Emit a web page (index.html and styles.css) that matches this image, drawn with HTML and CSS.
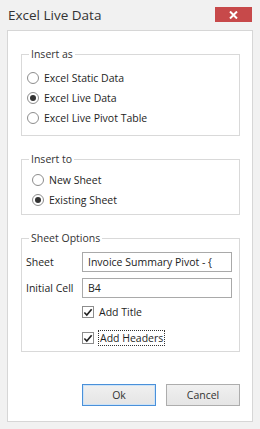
FILE: index.html
```html
<!DOCTYPE html>
<html lang="en">
<head>
    <meta charset="UTF-8" />
    <title>Excel Live Data</title>
    <link rel="stylesheet" href="styles.css">
</head>
<body>
    <div class="window">
        <!-- Title bar -->
        <div class="titlebar">
            <span class="title">Excel Live Data</span>
            <span class="close">
                <svg width="9" height="8" viewBox="0 0 9 8"><path d="M1 0.5 L8 7.5 M8 0.5 L1 7.5" stroke="#fff" stroke-width="2"/></svg>
            </span>
        </div>

        <div class="panel">
            <fieldset class="group group-as">
                <legend>Insert as</legend>
                <label class="row"><span class="radio"></span>Excel Static Data</label>
                <label class="row"><span class="radio checked"></span>Excel Live Data</label>
                <label class="row"><span class="radio"></span>Excel Live Pivot Table</label>
            </fieldset>

            <fieldset class="group group-to">
                <legend>Insert to</legend>
                <label class="row"><span class="radio"></span>New Sheet</label>
                <label class="row"><span class="radio checked"></span>Existing Sheet</label>
            </fieldset>

            <fieldset class="group group-options">
                <legend>Sheet Options</legend>
                <div class="field">
                    <span class="field-label">Sheet</span>
                    <span class="textbox">Invoice Summary Pivot - {</span>
                </div>
                <div class="field">
                    <span class="field-label">Initial Cell</span>
                    <span class="textbox">B4</span>
                </div>
                <label class="check-row">
                    <span class="check"><svg width="11" height="11" viewBox="0 0 11 11"><path d="M1.5 5.5 L4.2 8.3 L9.5 2" fill="none" stroke="#222" stroke-width="1.8"/></svg></span>
                    <span>Add Title</span>
                </label>
                <label class="check-row">
                    <span class="check"><svg width="11" height="11" viewBox="0 0 11 11"><path d="M1.5 5.5 L4.2 8.3 L9.5 2" fill="none" stroke="#222" stroke-width="1.8"/></svg></span>
                    <span class="focused">Add Headers</span>
                </label>
            </fieldset>

            <div class="buttons">
                <button class="btn btn-default">Ok</button>
                <button class="btn">Cancel</button>
            </div>
        </div>
    </div>
</body>
</html>
```

FILE: styles.css
```css
* {
    box-sizing: border-box;
    margin: 0;
    padding: 0;
}

html, body {
    width: 260px;
    height: 429px;
    overflow: hidden;
}

body {
    background: #f1f1f1;
    font-family: "Open Sans", "Noto Sans", sans-serif;
    font-size: 10.5px;
    color: #1e1e1e;
}

.window {
    height: 429px;
}

/* Title bar */
.titlebar {
    height: 30px;
    display: flex;
    align-items: flex-start;
    justify-content: space-between;
    padding: 5px 8px 0 8px;
}

.title {
    font-size: 13.5px;
    color: #333;
    line-height: 20px;
}

.close {
    width: 37px;
    height: 15px;
    margin-top: 2px;
    background: #c7494a;
    display: flex;
    align-items: center;
    justify-content: center;
}

/* White client area */
.panel {
    margin: 0 7px;
    height: 392px;
    background: #fff;
    border: 1px solid #d6d6d6;
    padding: 16px 12px 0 13px;
    display: flex;
    flex-direction: column;
}

.group {
    border: 1px solid #d9d9d9;
    min-width: 0;
    padding-left: 0;
}

.group legend {
    margin-left: 7px;
    padding: 0 2px;
    line-height: 14px;
    color: #333;
}

.group-as {
    padding-top: 7px;
    height: 89px;
}

.group-as .row {
    margin-left: 5px;
}

.group-to {
    margin-top: 16px;
    padding-top: 4px;
    height: 63px;
}

.group-to .row {
    margin-left: 10px;
}

.group-options {
    margin-top: 16px;
    padding-top: 7px;
    height: 121px;
}

.row {
    display: flex;
    align-items: center;
    height: 20px;
    gap: 5px;
}

.radio {
    width: 12px;
    height: 12px;
    border: 1px solid #8d8d8d;
    border-radius: 50%;
    background: #fff;
    display: flex;
    align-items: center;
    justify-content: center;
}

.radio.checked::after {
    content: "";
    width: 6px;
    height: 6px;
    border-radius: 50%;
    background: #333;
}

.field {
    display: flex;
    align-items: center;
    height: 20px;
    margin-left: 4px;
    margin-bottom: 6px;
}

.field + .field {
    margin-bottom: 4px;
}

.field-label {
    width: 56px;
}

.textbox {
    width: 150px;
    height: 20px;
    border: 1px solid #a9a9a9;
    padding: 0 5px;
    line-height: 18px;
    white-space: nowrap;
    overflow: hidden;
    color: #222;
}

.check-row {
    display: flex;
    align-items: center;
    height: 20px;
    margin-left: 60px;
    gap: 5px;
    margin-bottom: 6px;
}

.check {
    width: 12px;
    height: 12px;
    border: 1px solid #8d8d8d;
    background: #fff;
    display: flex;
    align-items: center;
    justify-content: center;
}

.focused {
    outline: 1px dotted #333;
    padding: 0 1px;
}

/* Dialog buttons */
.buttons {
    margin-top: auto;
    margin-bottom: 15px;
    display: flex;
    justify-content: flex-end;
    gap: 10px;
}

.btn {
    width: 74px;
    height: 22px;
    font-family: "Open Sans", "Noto Sans", sans-serif;
    font-size: 10.5px;
    color: #333;
    background: linear-gradient(#f0f0f0, #e5e5e5);
    border: 1px solid #adadad;
}

.btn-default {
    border-color: #4a90d9;
    box-shadow: inset 0 0 0 1px #cde3f7;
}
```
